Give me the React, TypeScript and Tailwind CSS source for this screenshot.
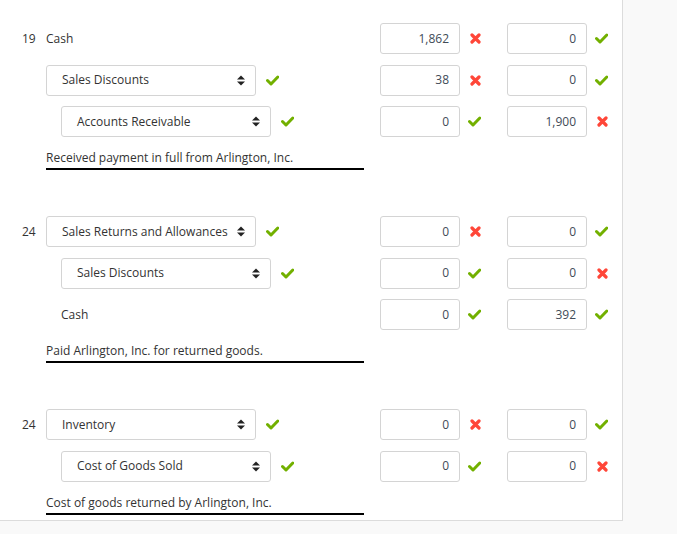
import React from "react"

type Mark = "ok" | "bad"

type Line = {
  num?: string
  account: string
  select: boolean
  indent: boolean
  debit: string
  debitMark: Mark
  credit: string
  creditMark: Mark
}

type Entry = { lines: Line[]; memo: string }

const entries: Entry[] = [
  {
    memo: "Received payment in full from Arlington, Inc.",
    lines: [
      { num: "19", account: "Cash", select: false, indent: false, debit: "1,862", debitMark: "bad", credit: "0", creditMark: "ok" },
      { account: "Sales Discounts", select: true, indent: false, debit: "38", debitMark: "bad", credit: "0", creditMark: "ok" },
      { account: "Accounts Receivable", select: true, indent: true, debit: "0", debitMark: "ok", credit: "1,900", creditMark: "bad" },
    ],
  },
  {
    memo: "Paid Arlington, Inc. for returned goods.",
    lines: [
      { num: "24", account: "Sales Returns and Allowances", select: true, indent: false, debit: "0", debitMark: "bad", credit: "0", creditMark: "ok" },
      { account: "Sales Discounts", select: true, indent: true, debit: "0", debitMark: "ok", credit: "0", creditMark: "bad" },
      { account: "Cash", select: false, indent: true, debit: "0", debitMark: "ok", credit: "392", creditMark: "ok" },
    ],
  },
  {
    memo: "Cost of goods returned by Arlington, Inc.",
    lines: [
      { num: "24", account: "Inventory", select: true, indent: false, debit: "0", debitMark: "bad", credit: "0", creditMark: "ok" },
      { account: "Cost of Goods Sold", select: true, indent: true, debit: "0", debitMark: "ok", credit: "0", creditMark: "bad" },
    ],
  },
]

function Check() {
  return (
    <svg width="13" height="11" viewBox="0 0 13 11" className="block">
      <path d="M1.5 5.5 L5 9 L11.8 2" fill="none" stroke="#72b000" strokeWidth="3" strokeLinejoin="round" strokeLinecap="round" />
    </svg>
  )
}

function Cross() {
  return (
    <svg width="11" height="11" viewBox="0 0 11 11" className="block">
      <path d="M2 2 L9 9 M9 2 L2 9" fill="none" stroke="#ff4638" strokeWidth="3.2" strokeLinecap="round" />
    </svg>
  )
}

function MarkIcon({ mark }: { mark: Mark }) {
  return mark === "ok" ? <Check /> : <Cross />
}

function SortArrows() {
  return (
    <svg width="8" height="11" viewBox="0 0 8 11" className="block">
      <path d="M0 4.5 L4 0.5 L8 4.5 Z" fill="#222" />
      <path d="M0 6.5 L4 10.5 L8 6.5 Z" fill="#222" />
    </svg>
  )
}

function Amount({ value, mark, last }: { value: string; mark: Mark; last?: boolean }) {
  return (
    <div className={last ? "flex items-center shrink-0" : "flex items-center shrink-0 w-[127px]"}>
      <div className="w-[80px] h-[31px] border border-[#d4d4d4] rounded-[3px] bg-white flex items-center justify-end pr-[10px] text-[12px] text-[#414b57]">
        {value}
      </div>
      <div className={mark === "ok" ? "ml-[8px]" : "ml-[10px]"}>
        <MarkIcon mark={mark} />
      </div>
    </div>
  )
}

function Row({ line }: { line: Line }) {
  return (
    <div className="flex items-center h-[31px]">
      <div className="w-[380px] shrink-0 flex items-center">
        <div className="w-[46px] shrink-0 pl-[22px] text-[12px]">{line.num}</div>
        <div className={line.indent ? "pl-[15px] flex items-center" : "flex items-center"}>
          {line.select ? (
            <>
              <div className="w-[210px] h-[31px] border border-[#d4d4d4] rounded-[3px] bg-white flex items-center justify-between pl-[15px] pr-[10px] text-[12px]">
                <span>{line.account}</span>
                <SortArrows />
              </div>
              <div className="ml-[10px]">
                <Check />
              </div>
            </>
          ) : (
            <span className="text-[12px]">{line.account}</span>
          )}
        </div>
      </div>
      <Amount value={line.debit} mark={line.debitMark} />
      <Amount value={line.credit} mark={line.creditMark} last />
    </div>
  )
}

export default function App() {
  return (
    <div className="min-h-screen bg-[#f9f9f9] text-[#333]" style={{ fontFamily: '"Open Sans", "Liberation Sans", sans-serif' }}>
      <div className="w-[623px] bg-white border-r border-b border-[#dcdcdc] pt-[23px] pb-[5px] flex flex-col gap-[46px]">
        {entries.map((entry, i) => (
          <div key={i}>
            <div className="flex flex-col gap-[10.5px]">
              {entry.lines.map((line, j) => (
                <Row key={j} line={line} />
              ))}
            </div>
            <div className="ml-[46px] mt-[12px] w-[318px] border-b-2 border-black pb-[2px] text-[12px] leading-[17px]">
              {entry.memo}
            </div>
          </div>
        ))}
      </div>
    </div>
  )
}
